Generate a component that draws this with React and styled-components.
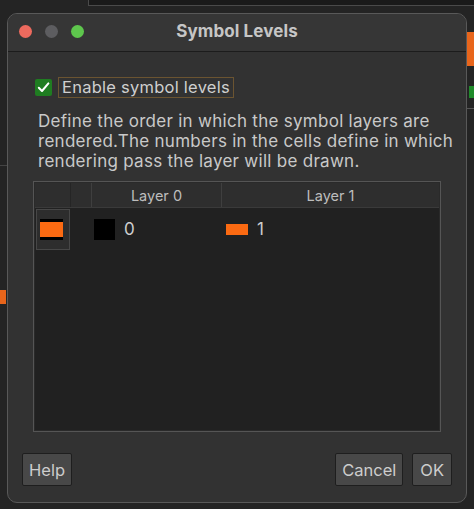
import React from 'react';
import styled, { createGlobalStyle } from 'styled-components';

const GlobalStyle = createGlobalStyle`
  html, body {
    margin: 0;
    padding: 0;
    background: #1f1f1f;
  }
  body {
    font-family: Inter, "Liberation Sans", sans-serif;
  }
`;

const Screen = styled.div`
  position: relative;
  width: 474px;
  height: 509px;
  overflow: hidden;
  background: #242424;
  padding: 13px 7px 6px 7px;
  box-sizing: border-box;
`;

// bits of the app window behind the dialog
const BackPiece = styled.div`
  position: absolute;
  left: ${(p) => p.x}px;
  top: ${(p) => p.y}px;
  width: ${(p) => p.w}px;
  height: ${(p) => p.h}px;
  background: ${(p) => p.bg || 'transparent'};
  border: ${(p) => p.border || 'none'};
  box-sizing: border-box;
`;

const Dialog = styled.div`
  position: relative;
  width: 460px;
  height: 490px;
  border: 1px solid #595959;
  border-radius: 10px;
  background: #323232;
  box-sizing: border-box;
  display: flex;
  flex-direction: column;
  overflow: hidden;
`;

const TitleBar = styled.div`
  position: relative;
  height: 37px;
  flex: none;
  background: #363636;
  border-bottom: 1px solid #1c1c1c;
  display: flex;
  align-items: center;
  justify-content: center;
`;

const Lights = styled.div`
  position: absolute;
  left: 11px;
  top: 11px;
  display: flex;
  gap: 13px;
`;

const Light = styled.span`
  width: 13px;
  height: 13px;
  border-radius: 50%;
  background: ${(p) => p.color};
`;

const Title = styled.div`
  font-size: 17px;
  font-weight: 700;
  color: #c6c6c6;
  letter-spacing: 0.1px;
  margin-top: -3px;
`;

const Body = styled.div`
  display: flex;
  flex-direction: column;
  padding: 24px 25px 0 25px;
`;

const CheckRow = styled.div`
  display: flex;
  align-items: center;
  height: 22px;
  gap: 6px;
  padding-left: 2px;
`;

const CheckBox = styled.span`
  width: 17px;
  height: 17px;
  background: #1f7d21;
  border-radius: 2px;
  display: flex;
  align-items: center;
  justify-content: center;
`;

const CheckLabel = styled.span`
  border: 1px solid #6b5431;
  padding: 0 3px;
  height: 21px;
  display: flex;
  align-items: center;
  font-size: 16.5px;
  letter-spacing: 0.25px;
  color: #cfcfcf;
  box-sizing: border-box;
`;

const Description = styled.p`
  margin: 13px 0 0 5px;
  font-size: 17px;
  letter-spacing: 0.28px;
  line-height: 20px;
  color: #c9c9c9;
  white-space: nowrap;
`;

const Table = styled.div`
  margin: 10px 0 0 0;
  width: 408px;
  height: 251px;
  border: 1px solid #555;
  padding: 1px;
  background: #2a2a2a;
  box-sizing: border-box;
  display: flex;
  flex-direction: column;
`;

const TableInner = styled.div`
  flex: 1;
  background: #212121;
  display: flex;
  flex-direction: column;
`;

const HeaderRow = styled.div`
  display: grid;
  grid-template-columns: 36px 21px 130px 1fr;
  height: 24px;
  background: #2e2e2e;
  border-bottom: 1px solid #3a3a3a;
`;

const HeaderCell = styled.div`
  border-right: 1px solid ${(p) => (p.dark ? '#252525' : '#3f3f3f')};
  display: flex;
  align-items: center;
  justify-content: center;
  font-size: 14.5px;
  color: #bdbdbd;
  &:last-child {
    border-right: none;
  }
`;

const DataRow = styled.div`
  display: grid;
  grid-template-columns: 36px 21px 130px 1fr;
  height: 42px;
`;

const RowHead = styled.div`
  margin: 1px 1px 0 1px;
  background: #2d2d2d;
  border: 1px solid #474747;
  display: flex;
  align-items: center;
  justify-content: center;
`;

const SymbolSwatch = styled.span`
  width: 23px;
  height: 21px;
  box-sizing: border-box;
  border-top: 3px solid #000;
  border-bottom: 3px solid #000;
  background: #fb6a12;
  margin-left: -3px;
`;

const Cell = styled.div`
  display: flex;
  align-items: center;
  gap: 9px;
  padding-left: ${(p) => p.pad}px;
  font-size: 17px;
  color: #cfcfcf;
`;

const Swatch = styled.span`
  width: ${(p) => p.w}px;
  height: ${(p) => p.h}px;
  background: ${(p) => p.bg};
`;

const Footer = styled.div`
  display: flex;
  align-items: center;
  padding: 21px 14px 0 14px;
  gap: 9px;
`;

const Spacer = styled.div`
  flex: 1;
`;

const Button = styled.button`
  height: 33px;
  padding: 0 ${(p) => p.pad || 6}px;
  background: #484848;
  border: 1px solid #1e1e1e;
  border-radius: 2px;
  color: #cdcdcd;
  font-family: Inter, "Liberation Sans", sans-serif;
  font-size: 16.5px;
  box-sizing: border-box;
`;

const App = () => (
  <>
    <GlobalStyle />
    <Screen>
      <BackPiece x={88} y={-2} w={400} h={8} bg="#1a1a1a" border="1px solid #4a4a4a" />
      <BackPiece x={467} y={32} w={7} h={34} bg="#e8651b" />
      <BackPiece x={469} y={86} w={5} h={12} bg="#1f8a2a" />
      <BackPiece x={467} y={108} w={7} h={1} bg="#555" />
      <BackPiece x={0} y={165} w={7} h={1} bg="#444" />
      <BackPiece x={0} y={290} w={6} h={14} bg="#e8651b" />
      <Dialog>
        <TitleBar>
          <Lights>
            <Light color="#ed6a5e" />
            <Light color="#5d5d60" />
            <Light color="#5ec64d" />
          </Lights>
          <Title>Symbol Levels</Title>
        </TitleBar>
        <Body>
          <CheckRow>
            <CheckBox>
              <svg width="13" height="13" viewBox="0 0 13 13">
                <path d="M1.8 6.8 L5 10 L11.4 2.4" fill="none" stroke="#fff" strokeWidth="2" strokeLinecap="round" strokeLinejoin="round" />
              </svg>
            </CheckBox>
            <CheckLabel>Enable symbol levels</CheckLabel>
          </CheckRow>
          <Description>
            Define the order in which the symbol layers are
            <br />
            rendered.The numbers in the cells define in which
            <br />
            rendering pass the layer will be drawn.
          </Description>
          <Table>
            <TableInner>
              <HeaderRow>
                <HeaderCell dark />
                <HeaderCell />
                <HeaderCell>Layer 0</HeaderCell>
                <HeaderCell>Layer 1</HeaderCell>
              </HeaderRow>
              <DataRow>
                <RowHead>
                  <SymbolSwatch />
                </RowHead>
                <div />
                <Cell pad={2}>
                  <Swatch w={21} h={21} bg="#000" />
                  0
                </Cell>
                <Cell pad={4}>
                  <Swatch w={22} h={11} bg="#fb6a12" />
                  1
                </Cell>
              </DataRow>
            </TableInner>
          </Table>
        </Body>
        <Footer>
          <Button>Help</Button>
          <Spacer />
          <Button>Cancel</Button>
          <Button pad={7}>OK</Button>
        </Footer>
      </Dialog>
    </Screen>
  </>
);

export default App;
